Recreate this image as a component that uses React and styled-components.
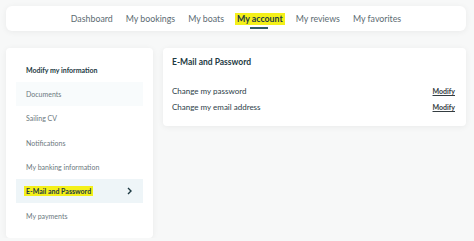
import React from 'react';
import styled, { createGlobalStyle } from 'styled-components';

const GlobalStyle = createGlobalStyle`
  html, body {
    margin: 0;
    padding: 0;
    background: #f7f8f8;
    font-family: Lato, "Noto Sans", sans-serif;
  }
`;

const Page = styled.div`
  padding: 6px 8px 0 6px;
`;

const NavBar = styled.nav`
  height: 25px;
  background: #fff;
  border-radius: 6px;
  box-shadow: 0 1px 6px rgba(0, 0, 0, 0.06);
  display: flex;
  align-items: center;
  justify-content: center;
  gap: 9px;
`;

const NavItem = styled.span`
  position: relative;
  font-size: 8.8px;
  color: ${p => (p.$active ? '#1d3a43' : '#5c6b72')};
  font-weight: ${p => (p.$active ? 700 : 400)};
  background: ${p => (p.$active ? '#f4f019' : 'transparent')};
  padding: 1px 2px;
  line-height: 10px;

  &::after {
    content: '';
    display: ${p => (p.$active ? 'block' : 'none')};
    position: absolute;
    left: 15px;
    width: 18px;
    bottom: -4px;
    height: 1.5px;
    background: #2f5a63;
  }
`;

const Body = styled.div`
  display: flex;
  align-items: flex-start;
  gap: 10px;
  margin-top: 17px;
`;

const Card = styled.div`
  background: #fff;
  border-radius: 4px;
  box-shadow: 0 1px 6px rgba(0, 0, 0, 0.06);
`;

const Sidebar = styled(Card)`
  width: 147px;
  padding: 16px 10px 10px;
  box-sizing: border-box;
`;

const SideTitle = styled.div`
  font-size: 7px;
  font-weight: 700;
  color: #1d3a43;
  line-height: 12px;
  padding-left: 10px;
  margin-bottom: 6px;
`;

const SideItem = styled.div`
  height: 24.3px;
  display: flex;
  align-items: center;
  justify-content: space-between;
  padding: 0 10px;
  font-size: 7px;
  color: #6b787e;
  background: ${p => (p.$active ? '#eef5f8' : p.$hover ? '#f8fbfc' : 'transparent')};
`;

const Mark = styled.span`
  background: #f4f019;
  color: #1d3a43;
  font-weight: 700;
  padding: 1px 2px;
  margin-left: -2px;
`;

const Main = styled(Card)`
  flex: 1;
  padding: 8px 10px 11px 9px;
`;

const MainTitle = styled.div`
  font-size: 8.5px;
  font-weight: 700;
  color: #1d3a43;
  line-height: 12px;
  margin-bottom: 15px;
`;

const Row = styled.div`
  display: flex;
  justify-content: space-between;
  align-items: center;
  height: 16px;
  font-size: 8px;
  color: #2c4049;
`;

const ModifyLink = styled.span`
  font-size: 7px;
  font-weight: 700;
  color: #343d41;
  text-decoration: underline;
  margin-right: 1px;
  cursor: pointer;
`;

const Chevron = () => (
  <svg width="7" height="8" viewBox="0 0 7 8">
    <path d="M2 1 L5 4 L2 7" fill="none" stroke="#1d3a43" strokeWidth="1.4" />
  </svg>
);

const navItems = ['Dashboard', 'My bookings', 'My boats', 'My account', 'My reviews', 'My favorites'];
const sideItems = ['Documents', 'Sailing CV', 'Notifications', 'My banking information', 'E-Mail and Password', 'My payments'];

export default function App() {
  return (
    <>
      <GlobalStyle />
      <Page>
        <NavBar>
          {navItems.map(n => (
            <NavItem key={n} $active={n === 'My account'}>{n}</NavItem>
          ))}
        </NavBar>
        <Body>
          <Sidebar>
            <SideTitle>Modify my information</SideTitle>
            {sideItems.map((s, i) => {
              const active = s === 'E-Mail and Password';
              return (
                <SideItem key={s} $active={active} $hover={i === 0}>
                  {active ? <Mark>{s}</Mark> : s}
                  {active && <Chevron />}
                </SideItem>
              );
            })}
          </Sidebar>
          <Main>
            <MainTitle>E-Mail and Password</MainTitle>
            <Row>
              Change my password
              <ModifyLink>Modify</ModifyLink>
            </Row>
            <Row>
              Change my email address
              <ModifyLink>Modify</ModifyLink>
            </Row>
          </Main>
        </Body>
      </Page>
    </>
  );
}
